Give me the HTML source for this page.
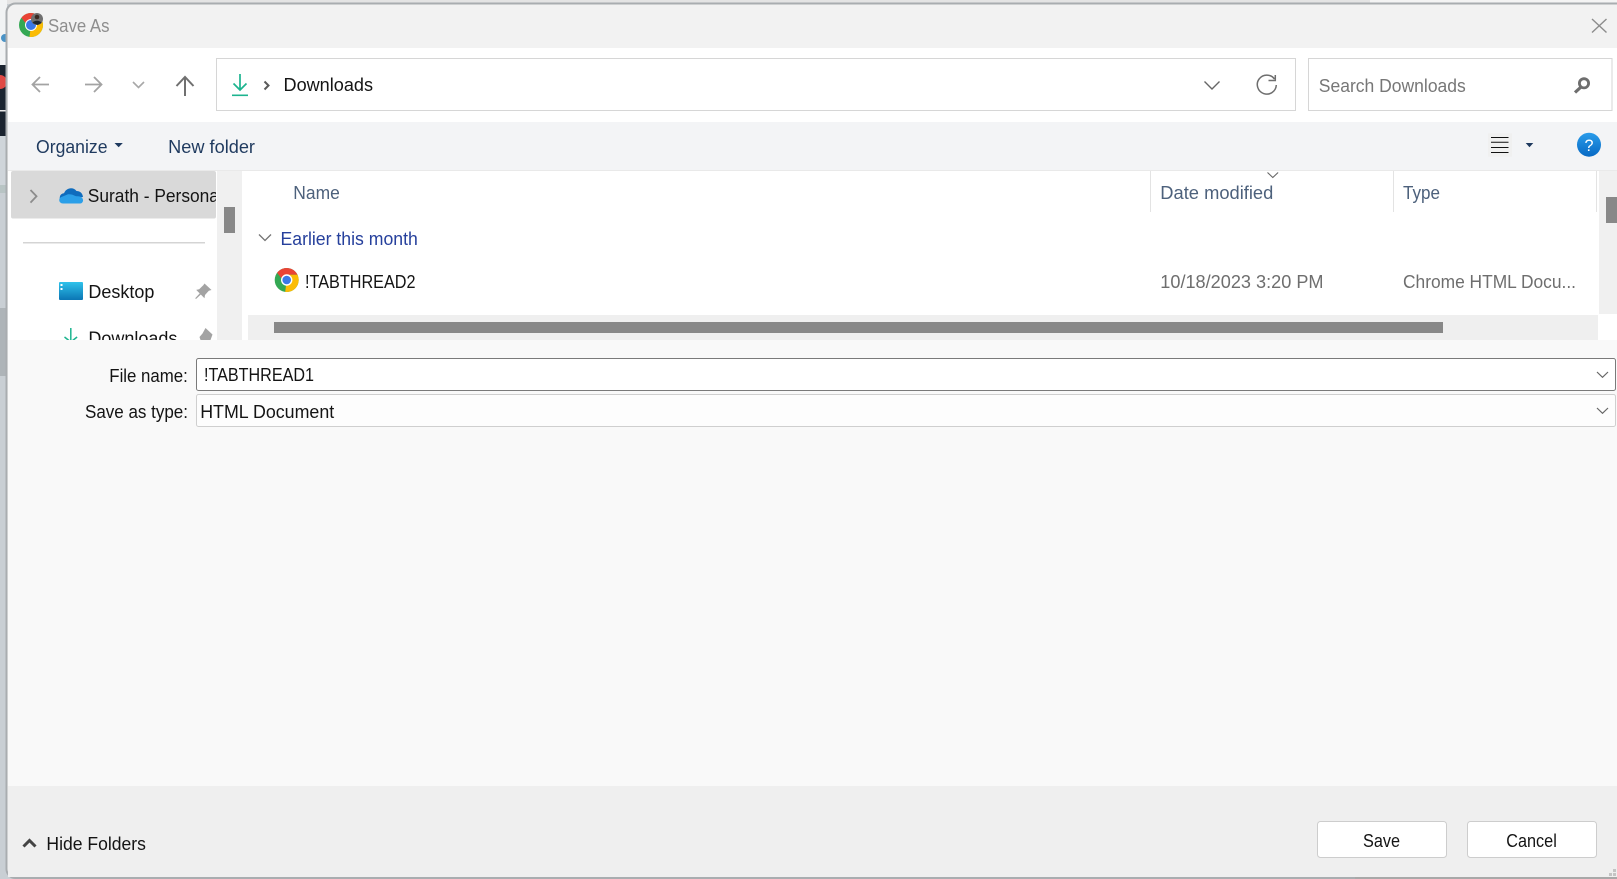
<!DOCTYPE html>
<html lang="en"><head><meta charset="utf-8"><title>Save As</title>
<style>
html,body{margin:0;padding:0;width:1617px;height:879px;overflow:hidden;background:#fff}
svg{display:block}
text{font-family:"Liberation Sans",sans-serif;font-size:18px;fill:#141414}
</style></head><body>
<svg width="1617" height="879" viewBox="0 0 1617 879" xmlns="http://www.w3.org/2000/svg">
<defs>
<linearGradient id="dk" x1="0" y1="0" x2="0" y2="1"><stop offset="0" stop-color="#2fc2ea"/><stop offset="1" stop-color="#0b76b4"/></linearGradient>
<linearGradient id="hp" x1="0" y1="0" x2="0" y2="1"><stop offset="0" stop-color="#2a9cea"/><stop offset="1" stop-color="#0769c4"/></linearGradient>
<clipPath id="sel"><rect x="0" y="170" width="216" height="60"/></clipPath>
</defs>
<!-- backdrop -->
<rect width="1617" height="879" fill="#c9cfd4"/>
<rect width="1617" height="4" fill="#e4e4e4"/>
<rect x="1370" width="247" height="4" fill="#f4f4f4"/>
<rect x="0" y="0" width="7" height="65" fill="#f1f3f4"/>
<circle cx="5" cy="38" r="4" fill="#4a93c6"/>
<rect x="0" y="65" width="7" height="71" fill="#1b2430"/>
<circle cx="0" cy="82" r="7" fill="#e04a45"/>
<rect x="0" y="110" width="7" height="1.500" fill="#e8e8e8"/>
<rect x="0" y="136" width="7" height="50" fill="#cfd5da"/>
<rect x="0" y="185" width="7" height="8" fill="#b8c4c4"/>
<rect x="0" y="308" width="7" height="68" fill="#aeb4b8"/>
<!-- dialog frame -->
<rect x="6.500" y="3.500" width="1620" height="874.500" rx="9" fill="#f2f2f2" stroke="#a9adb0" stroke-width="2"/>
<rect x="1355" y="877" width="262" height="2" fill="#a8a8a8"/>
<!-- nav row -->
<rect x="8" y="48" width="1609" height="74" fill="#fff"/>
<rect x="8" y="122" width="1609" height="48" fill="#f3f4f6"/>
<!-- address + search -->
<rect x="216.500" y="58.500" width="1079" height="52" fill="#fff" stroke="#d6d6d6" stroke-width="1"/>
<rect x="1308.500" y="58.500" width="303.500" height="52" fill="#fff" stroke="#d6d6d6" stroke-width="1"/>
<!-- content area -->
<rect x="8" y="170" width="1609" height="170" fill="#fff"/>
<rect x="8" y="170" width="1609" height="1" fill="#e9e9e9"/>
<rect x="11" y="171" width="205" height="47.500" rx="2" fill="#d9d9d9"/>
<rect x="23" y="242" width="182" height="1.500" fill="#d4d4d4"/>
<!-- sidebar text -->
<g clip-path="url(#sel)"><text x="87.800" y="202" textLength="135" lengthAdjust="spacingAndGlyphs">Surath - Personal</text></g>
<text x="88.400" y="298" textLength="66" lengthAdjust="spacingAndGlyphs">Desktop</text>
<text x="88.400" y="344.500" textLength="89" lengthAdjust="spacingAndGlyphs">Downloads</text>
<rect x="217" y="171" width="25" height="169" fill="#f0f0f0"/>
<rect x="224" y="207" width="11" height="26" fill="#888"/>
<!-- sidebar icons -->
<path d="M30.500 190l6 6.300-6 6.300" fill="none" stroke="#8c8c8c" stroke-width="1.800"/>
<path d="M60 200c-1-4 1-6.500 4-6.700 2-5.500 9-7 12.500-2.300 3.500 0 6 2 6.500 6z" fill="#0f6cbd"/>
<path d="M63 203.500c-4.500 0-5-5.700-1-6.700l6-2.500c4-.5 6.500 1.500 8.500 2 4.500-.5 7 2 6.500 4.700-.3 1.500-1.500 2.500-3 2.500z" fill="#2b9fe8"/>
<rect x="59" y="282" width="24" height="18" rx="1" fill="url(#dk)"/>
<rect x="60.500" y="284" width="2" height="2" fill="#fff"/><rect x="60.500" y="288" width="2" height="2" fill="#fff"/>
<path d="M204.500 283.500l7 6.500-2.700.8-3.800 4.200-.5 3.200-3.700-3.700-4.800 4.500-.8-.8 4.500-4.800-3.500-3.500 3-.6 4.200-4.200z" fill="#a3a3a3"/>
<path d="M205.500 328l7 6.500-2 5.500h-10l-1-3 3-3.500z" fill="#a3a3a3"/>
<path d="M70.800 328v14M64.500 337l6.300 5 6.300-5" fill="none" stroke="#1db48f" stroke-width="1.500"/>
<!-- title -->
<g transform="translate(31 25)">
<circle r="12" fill="#34a853"/>
<path d="M-9.600-7.200A12 12 0 0 1 10.800-5.200L0-5.200-5-1.400z" fill="#ea4335"/>
<path d="M10.800-5.200L0-5.200 0 0-1.500 11.900A12 12 0 0 0 10.800-5.200z" fill="#fbbc05"/>
<circle r="6" fill="#fff"/><circle r="5" fill="#3b78e7"/>
</g>
<circle cx="37" cy="19" r="6" fill="#707070"/>
<circle cx="37" cy="17" r="2.300" fill="#3a2a22"/>
<path d="M32.500 23c1-3 8-3 9 0l-4 2z" fill="#1f2730"/>
<text x="48" y="32" textLength="61.500" lengthAdjust="spacingAndGlyphs" style="fill:#8e8e8e">Save As</text>
<path d="M1592 19l14.500 13.500M1606.500 19L1592 32.500" fill="none" stroke="#8c8c8c" stroke-width="1.400"/>
<!-- nav icons -->
<path d="M49 84.500H33M40 77l-7.500 7.500L40 92" fill="none" stroke="#a3a3a3" stroke-width="1.800"/>
<path d="M85 84.500h16M94 77l7.500 7.500L94 92" fill="none" stroke="#a3a3a3" stroke-width="1.800"/>
<path d="M133 82l5.500 5.500L144 82" fill="none" stroke="#a8a8a8" stroke-width="1.600"/>
<path d="M185 96V77.500M176.500 86l8.500-9 8.500 9" fill="none" stroke="#707070" stroke-width="2"/>
<path d="M240 74v15.500M233.500 83.500l6.500 6.500 6.500-6.500" fill="none" stroke="#1db48f" stroke-width="1.700"/>
<rect x="232" y="94.500" width="16" height="1.600" fill="#1db48f"/>
<path d="M264.500 81.500l4 4-4 4" fill="none" stroke="#5a5a5a" stroke-width="2"/>
<text x="283.500" y="91" textLength="89.500" lengthAdjust="spacingAndGlyphs">Downloads</text>
<path d="M1204.500 81.500l7.500 7.500 7.500-7.500" fill="none" stroke="#666" stroke-width="1.400"/>
<path d="M1274.500 79A9.500 9.500 0 1 0 1276.300 85" fill="none" stroke="#6e6e6e" stroke-width="1.500"/>
<path d="M1268.500 80.500h6.800V75" fill="none" stroke="#6e6e6e" stroke-width="1.500"/>
<text x="1318.800" y="92" textLength="147" lengthAdjust="spacingAndGlyphs" style="fill:#777">Search Downloads</text>
<circle cx="1584" cy="83.300" r="4.600" fill="none" stroke="#6e6e6e" stroke-width="2.800"/>
<path d="M1581 87l-6 5.500" stroke="#6e6e6e" stroke-width="3.200" fill="none"/>
<!-- toolbar -->
<text x="36" y="153" textLength="71.500" lengthAdjust="spacingAndGlyphs" style="fill:#1f3a5f">Organize</text>
<path d="M114.500 143h8.300l-4.150 4.300z" fill="#1f3a5f"/>
<text x="168.200" y="153" textLength="86.800" lengthAdjust="spacingAndGlyphs" style="fill:#1f3a5f">New folder</text>
<rect x="1488" y="133.300" width="24" height="23.400" fill="#f0f0f0"/>
<path d="M1491 137.500h17.500M1491 142.300h17.500M1491 147.500h17.500M1491 152.500h17.500" stroke="#111" stroke-width="1"/>
<path d="M1525.700 143h7.600l-3.800 4.200z" fill="#1f3a5f"/>
<circle cx="1589" cy="144.700" r="12" fill="url(#hp)"/>
<text x="1584.500" y="151" textLength="9" lengthAdjust="spacingAndGlyphs" style="fill:#fff;font-size:17px">?</text>
<!-- columns -->
<path d="M1150.500 171v41M1393.500 171v41M1596.500 171v41" stroke="#e3e3e3" stroke-width="1"/>
<path d="M1267.500 172.500l5.300 5 5.300-5" fill="none" stroke="#666" stroke-width="1.100"/>
<text x="293.300" y="199" textLength="46.500" lengthAdjust="spacingAndGlyphs" style="fill:#4d617c">Name</text>
<text x="1160.300" y="199" textLength="113" lengthAdjust="spacingAndGlyphs" style="fill:#4d617c">Date modified</text>
<text x="1403" y="199" textLength="37" lengthAdjust="spacingAndGlyphs" style="fill:#4d617c">Type</text>
<path d="M259 234.500l6 6 6-6" fill="none" stroke="#737373" stroke-width="1.300"/>
<text x="280.500" y="245" textLength="137.300" lengthAdjust="spacingAndGlyphs" style="fill:#26409c">Earlier this month</text>
<g transform="translate(286.700 280)">
<circle r="12" fill="#34a853"/>
<path d="M-9.600-7.200A12 12 0 0 1 10.800-5.200L0-5.200-5-1.400z" fill="#ea4335"/>
<path d="M10.800-5.200L0-5.200 0 0-1.500 11.900A12 12 0 0 0 10.800-5.200z" fill="#fbbc05"/>
<circle r="5.700" fill="#fff"/><circle r="4.300" fill="#3b78e7"/>
</g>
<text x="305" y="288" textLength="110.500" lengthAdjust="spacingAndGlyphs">!TABTHREAD2</text>
<text x="1160.300" y="288" textLength="163.200" lengthAdjust="spacingAndGlyphs" style="fill:#6e6e6e">10/18/2023 3:20 PM</text>
<text x="1403" y="288" textLength="173" lengthAdjust="spacingAndGlyphs" style="fill:#6e6e6e">Chrome HTML Docu...</text>
<!-- scrollbars -->
<rect x="1599" y="171" width="18" height="143" fill="#f0f0f0"/>
<rect x="1606" y="197" width="11" height="26" fill="#888"/>
<rect x="248" y="315" width="1350" height="25" fill="#efefef"/>
<rect x="274" y="322" width="1169" height="11" fill="#888"/>
<!-- lower pane -->
<rect x="8" y="340" width="1609" height="446" fill="#f9f9f9"/>
<text x="109.300" y="382" textLength="78.500" lengthAdjust="spacingAndGlyphs">File name:</text>
<text x="85" y="418" textLength="103" lengthAdjust="spacingAndGlyphs">Save as type:</text>
<rect x="196.500" y="358.500" width="1419" height="32" rx="2" fill="#fff" stroke="#7a7a7a" stroke-width="1"/>
<rect x="196.500" y="394.500" width="1419" height="32" rx="2" fill="#fdfdfd" stroke="#cfcfcf" stroke-width="1"/>
<text x="204" y="381" textLength="110" lengthAdjust="spacingAndGlyphs">!TABTHREAD1</text>
<text x="200.200" y="418" textLength="134" lengthAdjust="spacingAndGlyphs">HTML Document</text>
<path d="M1597 372l5.500 5.300 5.500-5.300M1597 408l5.500 5.300 5.500-5.300" fill="none" stroke="#666" stroke-width="1.200"/>
<!-- footer -->
<rect x="8" y="786" width="1609" height="91" fill="#efefef"/>
<path d="M23.500 846.500l6-6 6 6" fill="none" stroke="#444" stroke-width="3"/>
<text x="46.400" y="850" textLength="99.500" lengthAdjust="spacingAndGlyphs">Hide Folders</text>
<rect x="1317.500" y="821.500" width="129" height="36" rx="3" fill="#fff" stroke="#cdcdcd" stroke-width="1"/>
<rect x="1467.500" y="821.500" width="129" height="36" rx="3" fill="#fff" stroke="#cdcdcd" stroke-width="1"/>
<text x="1363" y="847" textLength="37" lengthAdjust="spacingAndGlyphs">Save</text>
<text x="1506.300" y="847" textLength="50.500" lengthAdjust="spacingAndGlyphs">Cancel</text>
<path d="M1613 869h3v3h-3zM1609 873h3v3h-3zM1613 873h3v3h-3z" fill="#c4c4c4"/>
</svg>
</body></html>
